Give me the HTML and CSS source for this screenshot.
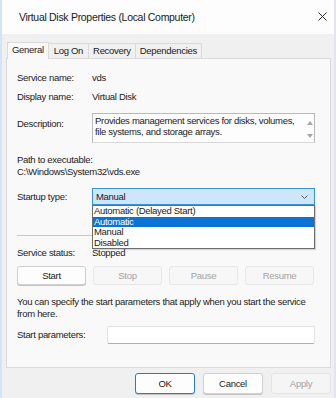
FILE: index.html
```html
<!DOCTYPE html>
<html>
<head>
<meta charset="utf-8">
<link rel="stylesheet" href="styles.css">
</head>
<body>
<div class="window">
  <div class="titlebar">
    <span class="title">Virtual Disk Properties (Local Computer)</span>
    <svg class="close" width="9" height="9" viewBox="0 0 9 9"><path d="M0.5 0.5 L8.5 8.5 M8.5 0.5 L0.5 8.5" stroke="#2b2b2b" stroke-width="1" fill="none"/></svg>
  </div>
  <div class="tabs">
    <div class="tab active">General</div>
    <div class="tab">Log On</div>
    <div class="tab">Recovery</div>
    <div class="tab">Dependencies</div>
  </div>
  <div class="panel">
    <div class="row r-name"><span class="label">Service name:</span><span>vds</span></div>
    <div class="row r-display"><span class="label">Display name:</span><span>Virtual Disk</span></div>
    <div class="row r-desc">
      <span class="label desc-label">Description:</span>
      <div class="textarea">
        <div class="ta-text">Provides management services for disks, volumes, file systems, and storage arrays.</div>
        <div class="ta-scroll">
          <svg width="6" height="4" viewBox="0 0 6 4"><path d="M0 4 L3 0 L6 4 Z" fill="#a6a6a6"/></svg>
          <svg width="6" height="4" viewBox="0 0 6 4"><path d="M0 0 L3 4 L6 0 Z" fill="#a6a6a6"/></svg>
        </div>
      </div>
    </div>
    <div class="path-label">Path to executable:</div>
    <div class="path-value">C:\Windows\System32\vds.exe</div>
    <div class="row r-startup">
      <span class="label">Startup type:</span>
      <div class="select">
        <span>Manual</span>
        <svg width="7" height="4" viewBox="0 0 7 4"><path d="M0.5 0.5 L3.5 3.5 L6.5 0.5" stroke="#5a5a5a" stroke-width="1" fill="none"/></svg>
      </div>
      <div class="dropdown">
        <div class="opt">Automatic (Delayed Start)</div>
        <div class="opt sel">Automatic</div>
        <div class="opt">Manual</div>
        <div class="opt">Disabled</div>
      </div>
    </div>
    <div class="separator"></div>
    <div class="row r-status"><span class="label">Service status:</span><span>Stopped</span></div>
    <div class="svc-buttons">
      <div class="btn">Start</div>
      <div class="btn disabled">Stop</div>
      <div class="btn disabled">Pause</div>
      <div class="btn disabled">Resume</div>
    </div>
    <p class="hint">You can specify the start parameters that apply when you start the service from here.</p>
    <div class="row r-params"><span class="label params-label">Start parameters:</span><div class="input"></div></div>
  </div>
  <div class="footer">
    <div class="fbtn default">OK</div>
    <div class="fbtn">Cancel</div>
    <div class="fbtn disabled">Apply</div>
  </div>
</div>
</body>
</html>
```
FILE: styles.css
```css
* { box-sizing: border-box; }
html, body { margin: 0; padding: 0; }
body {
  width: 336px;
  height: 398px;
  overflow: hidden;
  font-family: "Liberation Sans", Arial, sans-serif;
  font-size: 9.5px;
  letter-spacing: -0.3px;
  color: #1b1b1b;
  background: #f0f0f0;
}
.window {
  width: 336px;
  height: 398px;
  background: #f0f0f0;
  border-left: 2px solid #d3e4f4;
  border-right: 2px solid #e2e6ea;
  display: flex;
  flex-direction: column;
}
.titlebar {
  height: 34px;
  flex: none;
  background: #fdfdfd;
  display: flex;
  align-items: center;
  padding: 0 7px 1px 17px;
}
.title {
  font-size: 10.5px;
  letter-spacing: -0.3px;
  flex: 1;
  color: #1a1a1a;
}
.close { display: block; }
.tabs {
  display: flex;
  padding: 8px 0 0 5px;
  align-items: flex-end;
  flex: none;
}
.tab {
  height: 15px;
  padding: 0 4px;
  line-height: 13px;
  border: 1px solid #dadada;
  border-bottom: none;
  border-left: none;
  background: #f0f0f0;
}
.tab:nth-child(2) { border-left: 1px solid #dadada; margin-left: -1px; }
.tab:nth-child(2) { padding: 0 5px; }
.tab.active {
  background: #f9f9f9;
  border-left: 1px solid #dadada;
  padding: 0 4px;
  line-height: 14px;
  position: relative;
  z-index: 1;
  margin-bottom: -1px;
  height: 17px;
}
.panel {
  margin: 0 3px 0 4px;
  height: 310px;
  background: #f9f9f9;
  border: 1px solid #dadada;
  padding: 13px 15px 0 10px;
  flex: none;
}
.row {
  display: flex;
  align-items: center;
  line-height: 12px;
}
.label { width: 75px; flex: none; }
.r-display { margin-top: 7px; }
.r-desc { margin-top: 10px; align-items: flex-start; }
.desc-label { margin-top: 5px; }
.textarea {
  flex: 1;
  height: 30px;
  border: 1px solid #b9b9b9;
  border-bottom-color: #d8d8d8;
  background: #fdfdfd;
  display: flex;
  padding: 1px 0 0 2px;
}
.ta-text { flex: 1; line-height: 11px; }
.ta-scroll {
  width: 9px;
  display: flex;
  flex-direction: column;
  justify-content: space-between;
  align-items: center;
  padding: 6px 0 4px;
}
.ta-scroll svg { display: block; }
.path-label { margin-top: 11px; line-height: 12px; }
.path-value { line-height: 12px; }
.r-startup { margin-top: 10px; position: relative; }
.select {
  flex: 1;
  height: 17px;
  border: 1px solid #3a8fd9;
  background: #cde6f9;
  display: flex;
  align-items: center;
  justify-content: space-between;
  padding: 0 6px 0 3px;
}
.select svg { display: block; }
.dropdown {
  position: absolute;
  left: 75px;
  right: 0;
  top: 17px;
  height: 44px;
  background: #fff;
  border: 1px solid #6e6e6e;
  z-index: 5;
  box-shadow: 1px 1px 1px rgba(0,0,0,0.15);
}
.opt {
  height: 10.5px;
  line-height: 10.5px;
  padding-left: 1px;
}
.opt.sel { background: #0a73d3; color: #fff; }
.separator {
  margin-top: 30px;
  height: 1px;
  background: #c9c9c9;
}
.r-status { margin-top: 11px; }
.svc-buttons {
  margin-top: 7px;
  display: flex;
  gap: 7px;
}
.btn {
  width: 69px;
  height: 19px;
  border: 1px solid #d0d0d0;
  border-radius: 3px;
  background: #fdfdfd;
  display: flex;
  align-items: center;
  justify-content: center;
  box-shadow: 0 1px 0 #c4c4c4;
}
.btn.disabled {
  color: #a3a3a3;
  background: #f7f7f7;
  border-color: #e6e6e6;
  box-shadow: none;
}
.hint {
  margin: 11px 0 0;
  line-height: 11.5px;
}
.r-params { margin-top: 7px; }
.params-label { width: 90px; }
.input {
  flex: 1;
  height: 18px;
  background: #fff;
  border: 1px solid #e3e3e3;
  border-bottom-color: #b0b0b0;
  border-radius: 2px;
}
.footer {
  flex: 1;
  display: flex;
  justify-content: flex-end;
  gap: 8px;
  padding: 5px 3px 0 0;
  align-items: flex-start;
}
.fbtn {
  width: 60px;
  height: 21px;
  border: 1px solid #d0d0d0;
  border-radius: 3px;
  background: #fdfdfd;
  display: flex;
  align-items: center;
  justify-content: center;
  box-shadow: 0 1px 0 #c4c4c4;
}
.fbtn.default { border: 1px solid #2a78d0; }
.fbtn.disabled { color: #a3a3a3; background: #f5f5f5; border-color: #e4e4e4; box-shadow: none; }
```
